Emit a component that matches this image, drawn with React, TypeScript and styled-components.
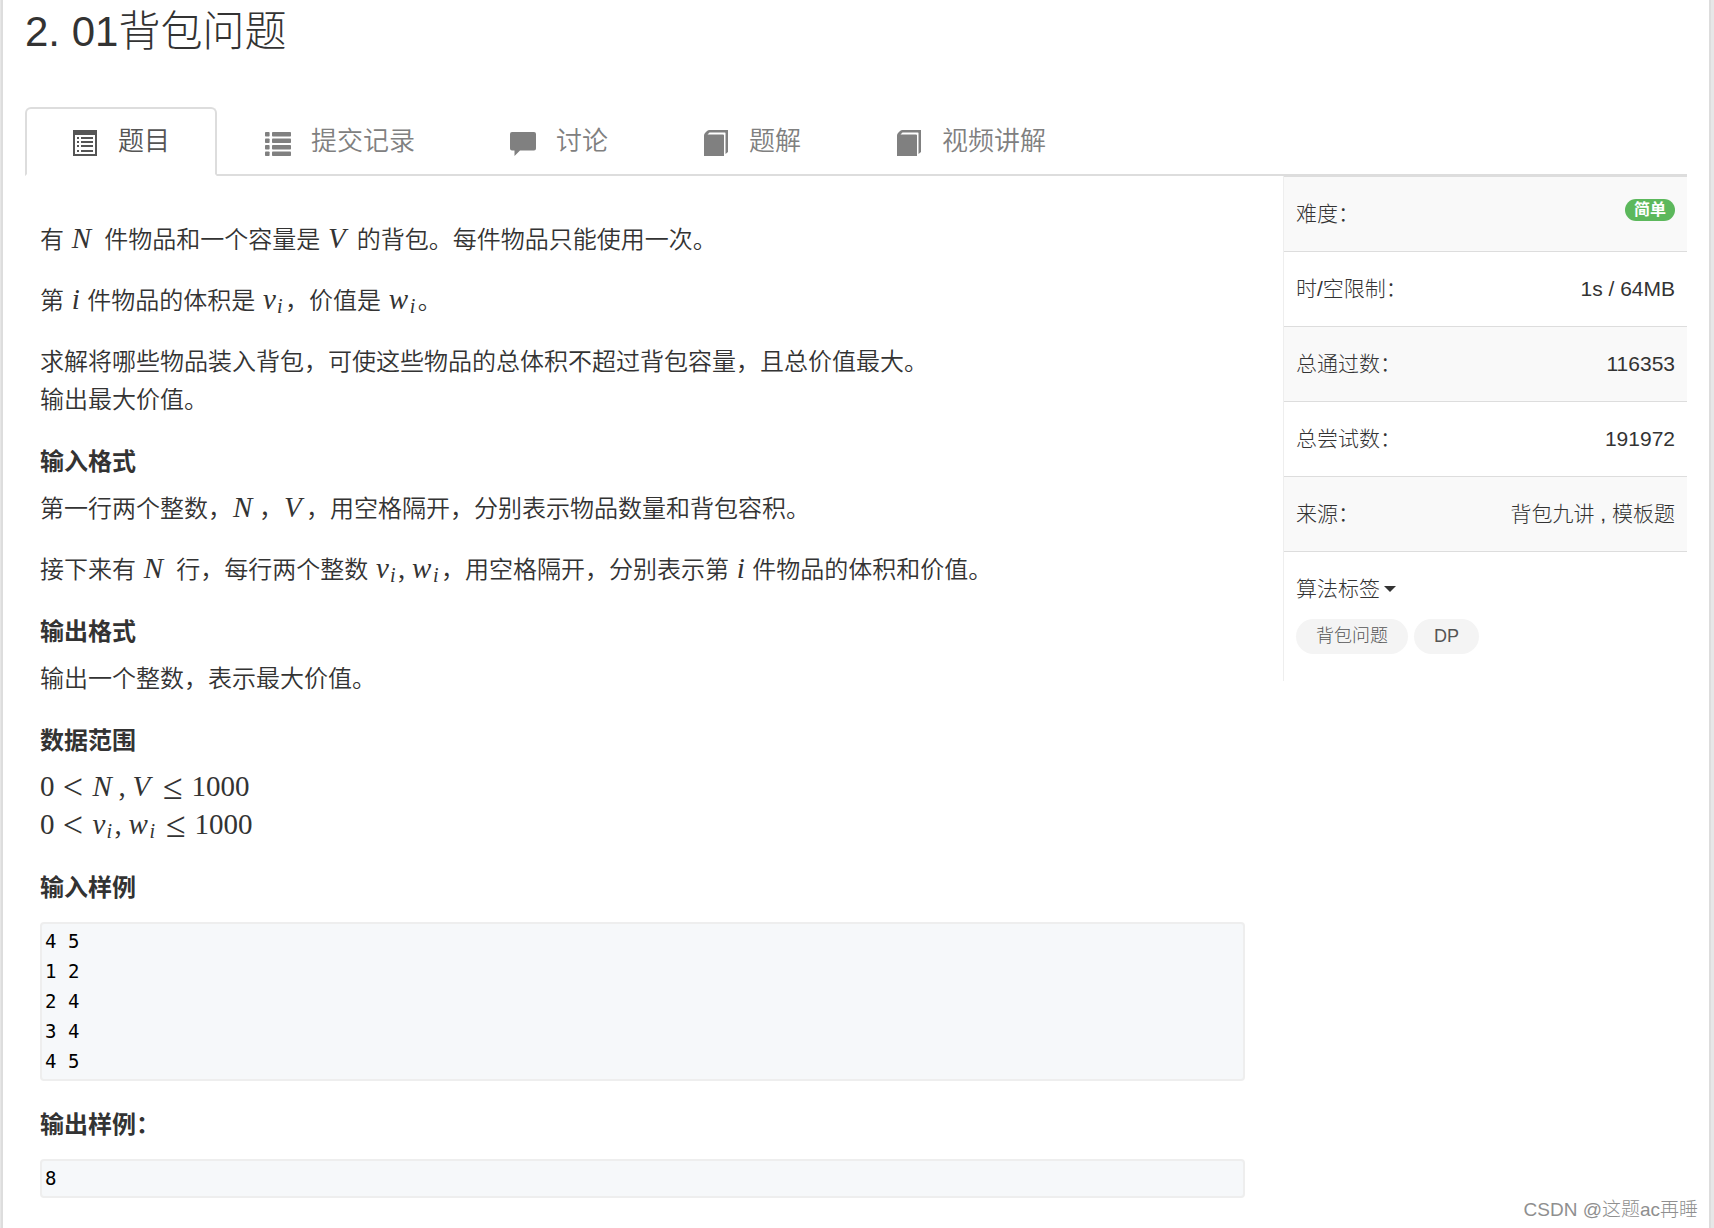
import React from "react";
import styled, { createGlobalStyle } from "styled-components";

const sans = `"Liberation Sans", "Noto Sans CJK SC", sans-serif`;
const serif = `"Liberation Serif", "Noto Sans CJK SC", serif`;

const GlobalStyle = createGlobalStyle`
  *, *::before, *::after { box-sizing: border-box; }
  body {
    margin: 0;
    background: #e7e7e7;
    color: #333;
    font-family: ${sans};
    font-size: 24px;
    line-height: 38px;
  }
`;

const Page = styled.div`
  position: relative;
  min-height: 100vh;
  padding: 0 3px 0 1px;
`;

const Panel = styled.main`
  min-height: 100vh;
  padding: 0 22px 24px;
  background: #fff;
  border: solid #ddd;
  border-width: 0 2px;
`;

const Title = styled.h1`
  margin: 0;
  padding: 1px 0 44px;
  font-size: 42px;
  font-weight: 300;
  line-height: 62px;
`;

const TabBar = styled.nav`
  display: flex;
  gap: 1px;
  border-bottom: 2px solid #ddd;
`;

const Tab = styled.a<{ $active?: boolean }>`
  display: flex;
  align-items: center;
  gap: 20px;
  height: 69px;
  margin-bottom: -2px;
  padding: 0 45px 1px;
  border: 2px solid;
  border-color: ${(p) => (p.$active ? "#ddd #ddd #fff" : "transparent")};
  border-radius: 6px 6px 0 0;
  color: ${(p) => (p.$active ? "#555" : "#808080")};
  font-size: 26px;
  font-weight: 350;
  text-decoration: none;
`;

const Icon = styled.svg`
  width: 26px;
  height: 26px;
  margin-top: 3px;
  fill: currentColor;
`;

const Columns = styled.div`
  display: flex;
  align-items: flex-start;
`;

const Article = styled.article`
  flex: 1;
  min-width: 0;
  padding: 45px 38px 0 15px;
  font-weight: 350;
`;

const Paragraph = styled.p`
  margin: 0 0 23px;
`;

const Heading = styled.h2`
  margin: 30px 0 15px;
  font-size: 24px;
  font-weight: 700;
  line-height: 26px;
`;

const Sample = styled.pre`
  margin: 21px 0 31px;
  padding: 2px 3px 3px;
  background: #f6f8fa;
  border: 2px solid #eee;
  border-radius: 4px;
  color: #000;
  font-family: "DejaVu Sans Mono", monospace;
  font-size: 19px;
  font-weight: 400;
  line-height: 30px;

  &:last-child {
    margin-bottom: 0;
  }
`;

const Formula = styled.span`
  font-family: ${serif};
  font-size: 29px;
  font-weight: 400;
  line-height: 1;
  white-space: nowrap;
`;

const glyphWidths: Record<string, number> = { N: 27, V: 23, i: 10, v: 15, w: 22 };

const Letter = styled.i<{ $width: number }>`
  display: inline-block;
  width: ${(p) => p.$width}px;
  padding-left: 1px;
`;

const Subscript = styled.sub`
  display: inline-block;
  width: 8px;
  font-size: 20px;
  font-style: italic;
  line-height: 1;
  vertical-align: -4px;
`;

const Relation = styled.span`
  display: inline-block;
  width: 37px;
  font-size: 36px;
  line-height: 24px;
  text-align: center;
  vertical-align: -3px;
`;

const Comma = styled.span`
  display: inline-block;
  width: 13px;
`;

const WideComma = styled.span`
  font-size: 24px;
`;

const Aside = styled.aside`
  flex: 0 0 404px;
  border-left: 1px solid #eee;
  font-size: 21px;
  font-weight: 300;
  line-height: 30px;
`;

const InfoTable = styled.table`
  width: 100%;
  border-collapse: separate;
  border-spacing: 0;

  tr:nth-child(odd) {
    background: #f9f9f9;
  }
  th,
  td {
    height: 75px;
    padding: 0 12px;
    border-top: 1px solid #ddd;
    font-weight: 300;
    text-align: left;
  }
  td {
    text-align: right;
  }
`;

const Badge = styled.span`
  display: block;
  width: fit-content;
  margin: 0 0 8px auto;
  padding: 0 9px;
  background: #5cb85c;
  border-radius: 11px;
  color: #fff;
  font-size: 16px;
  font-weight: 700;
  line-height: 22px;
`;

const TagSection = styled.section`
  padding: 22px 12px 27px;
  border-top: 1px solid #ddd;
`;

const TagToggle = styled.button`
  display: flex;
  align-items: center;
  gap: 4px;
  padding: 0;
  background: none;
  border: 0;
  color: inherit;
  font: inherit;

  &::after {
    content: "";
    border: solid transparent;
    border-width: 6px 6px 0;
    border-top-color: #333;
  }
`;

const TagList = styled.div`
  display: flex;
  flex-wrap: wrap;
  gap: 6px;
  margin-top: 15px;
`;

const Tag = styled.a`
  padding: 0 20px;
  background: #f4f4f4;
  border-radius: 18px;
  color: #555;
  font-size: 18px;
  line-height: 35px;
  text-decoration: none;
`;

const Watermark = styled.div`
  position: absolute;
  right: 16px;
  bottom: 3px;
  color: #8f8f8f;
  font-size: 19px;
  font-weight: 300;
  line-height: 30px;
`;

const ListAltIcon = () => (
  <Icon viewBox="0 0 26 26" aria-hidden="true">
    <path fillRule="evenodd" d="M1 0H25V26H1ZM3 5V24H23V5Z" />
    <path d="M5 7h2v2H5zM9 7h12v2H9zM5 11h2v2H5zM9 11h12v2H9zM5 15h2v2H5zM9 15h12v2H9zM5 20h2v2H5zM9 20h12v2H9z" />
  </Icon>
);

const ListIcon = () => (
  <Icon viewBox="0 0 26 26" aria-hidden="true">
    {[2, 8.5, 15, 21.5].map((y) => (
      <React.Fragment key={y}>
        <rect x="0" y={y} width="4.6" height="4.5" rx="0.8" />
        <rect x="7" y={y} width="19" height="4.5" rx="0.8" />
      </React.Fragment>
    ))}
  </Icon>
);

const CommentIcon = () => (
  <Icon viewBox="0 0 26 26" aria-hidden="true">
    <path d="M2 2H24a2 2 0 0 1 2 2V18.500a2 2 0 0 1-2 2H10L4.500 26V20.500H2a2 2 0 0 1-2-2V4a2 2 0 0 1 2-2Z" />
  </Icon>
);

const BookIcon = () => (
  <Icon viewBox="0 0 26 26" aria-hidden="true">
    <path d="M1 26V5.500Q1 4 2 3L4 1Q5 0 6.500 0H25V22L22.500 24V3Q22.500 2.500 22 2.500H6.500L4.500 4.500H20Q21 4.500 21 5.500V26Z" />
  </Icon>
);

const tabs = [
  { label: "题目", icon: <ListAltIcon />, active: true },
  { label: "提交记录", icon: <ListIcon /> },
  { label: "讨论", icon: <CommentIcon /> },
  { label: "题解", icon: <BookIcon /> },
  { label: "视频讲解", icon: <BookIcon /> },
];

const facts: { label: string; value: React.ReactNode }[] = [
  { label: "难度：", value: <Badge>简单</Badge> },
  { label: "时/空限制：", value: "1s / 64MB" },
  { label: "总通过数：", value: "116353" },
  { label: "总尝试数：", value: "191972" },
  { label: "来源：", value: "背包九讲 , 模板题" },
];

const Var = ({ name, sub }: { name: string; sub?: string }) => (
  <>
    <Letter $width={glyphWidths[name]}>{name}</Letter>
    {sub && <Subscript>{sub}</Subscript>}
  </>
);

export default function App() {
  return (
    <Page>
      <GlobalStyle />
      <Panel>
        <Title>2. 01背包问题</Title>
        <TabBar>
          {tabs.map((tab) => (
            <Tab key={tab.label} href="#" $active={tab.active}>
              {tab.icon}
              {tab.label}
            </Tab>
          ))}
        </TabBar>
        <Columns>
          <Article>
            <Paragraph>
              有 <Formula><Var name="N" /></Formula> 件物品和一个容量是{" "}
              <Formula><Var name="V" /></Formula> 的背包。每件物品只能使用一次。
            </Paragraph>
            <Paragraph>
              第 <Formula><Var name="i" /></Formula> 件物品的体积是{" "}
              <Formula><Var name="v" sub="i" /></Formula>，价值是{" "}
              <Formula><Var name="w" sub="i" /></Formula>。
            </Paragraph>
            <Paragraph>
              求解将哪些物品装入背包，可使这些物品的总体积不超过背包容量，且总价值最大。
              <br />
              输出最大价值。
            </Paragraph>

            <Heading>输入格式</Heading>
            <Paragraph>
              第一行两个整数，
              <Formula>
                <Var name="N" /><WideComma>，</WideComma><Var name="V" />
              </Formula>
              ，用空格隔开，分别表示物品数量和背包容积。
            </Paragraph>
            <Paragraph>
              接下来有 <Formula><Var name="N" /></Formula> 行，每行两个整数{" "}
              <Formula>
                <Var name="v" sub="i" /><Comma>,</Comma><Var name="w" sub="i" />
              </Formula>
              ，用空格隔开，分别表示第 <Formula><Var name="i" /></Formula> 件物品的体积和价值。
            </Paragraph>

            <Heading>输出格式</Heading>
            <Paragraph>输出一个整数，表示最大价值。</Paragraph>

            <Heading>数据范围</Heading>
            <Paragraph>
              <Formula>
                0<Relation>&lt;</Relation><Var name="N" /><Comma>,</Comma><Var name="V" />
                <Relation>≤</Relation>1000
              </Formula>
              <br />
              <Formula>
                0<Relation>&lt;</Relation><Var name="v" sub="i" /><Comma>,</Comma>
                <Var name="w" sub="i" /><Relation>≤</Relation>1000
              </Formula>
            </Paragraph>

            <Heading>输入样例</Heading>
            <Sample>{"4 5\n1 2\n2 4\n3 4\n4 5"}</Sample>

            <Heading>输出样例：</Heading>
            <Sample>8</Sample>
          </Article>

          <Aside>
            <InfoTable>
              <tbody>
                {facts.map((fact) => (
                  <tr key={fact.label}>
                    <th scope="row">{fact.label}</th>
                    <td>{fact.value}</td>
                  </tr>
                ))}
              </tbody>
            </InfoTable>
            <TagSection>
              <TagToggle type="button">算法标签</TagToggle>
              <TagList>
                <Tag href="#">背包问题</Tag>
                <Tag href="#">DP</Tag>
              </TagList>
            </TagSection>
          </Aside>
        </Columns>
      </Panel>
      <Watermark>CSDN @这题ac再睡</Watermark>
    </Page>
  );
}
